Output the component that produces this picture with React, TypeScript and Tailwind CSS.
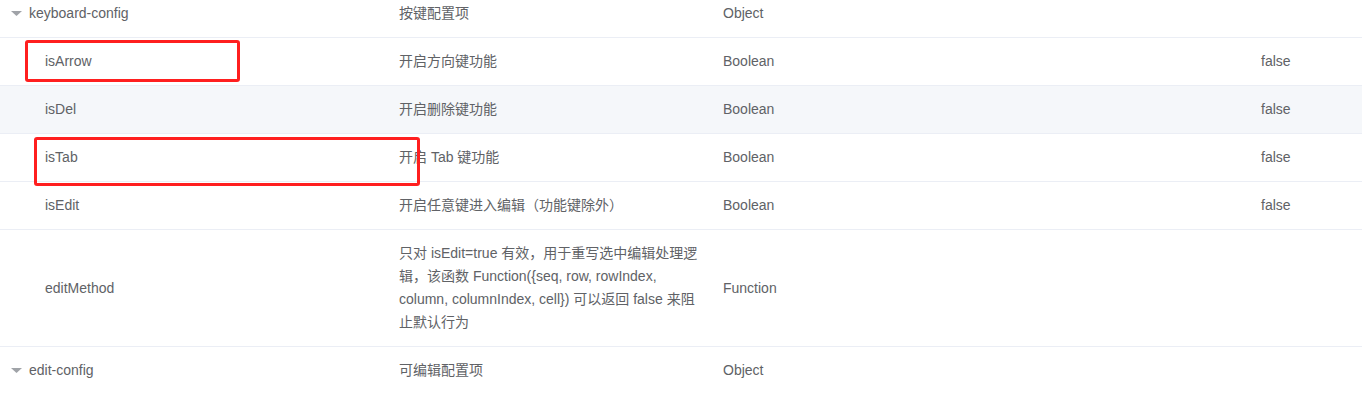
import React from 'react';

type Row = {
    name: string;
    desc: React.ReactNode;
    type: string;
    def?: string;
    parent?: boolean;
    striped?: boolean;
    tall?: boolean;
};

const rows: Row[] = [
    { name: 'keyboard-config', desc: '按键配置项', type: 'Object', parent: true },
    { name: 'isArrow', desc: '开启方向键功能', type: 'Boolean', def: 'false' },
    { name: 'isDel', desc: '开启删除键功能', type: 'Boolean', def: 'false', striped: true },
    { name: 'isTab', desc: '开启 Tab 键功能', type: 'Boolean', def: 'false' },
    { name: 'isEdit', desc: '开启任意键进入编辑（功能键除外）', type: 'Boolean', def: 'false' },
    {
        name: 'editMethod',
        desc: '只对 isEdit=true 有效，用于重写选中编辑处理逻辑，该函数 Function({seq, row, rowIndex, column, columnIndex, cell}) 可以返回 false 来阻止默认行为',
        type: 'Function',
        tall: true,
    },
    { name: 'edit-config', desc: '可编辑配置项', type: 'Object', parent: true },
];

const Caret = () => (
    <svg width="11" height="5" viewBox="0 0 11 5" className="mr-[7px] shrink-0">
        <path d="M0 0 L11 0 L5.5 5 Z" fill="#a0a3a8" />
    </svg>
);

const App = () => {
    return (
        <div
            className="relative w-[1362px] h-[393px] overflow-hidden bg-white text-[14px] text-[#606266]"
            style={{ fontFamily: '"Liberation Sans", Arial, "Noto Sans CJK SC", sans-serif' }}
        >
            <div className="-mt-[10px]">
                {rows.map((r) => (
                    <div
                        key={r.name}
                        className={`flex items-center border-b border-[#ebeef5] ${r.tall ? 'py-3' : 'h-12'} ${r.striped ? 'bg-[#f5f7fa]' : 'bg-white'}`}
                    >
                        <div className={`w-[387px] shrink-0 flex items-center ${r.parent ? 'pl-[11px]' : 'pl-[45px]'}`}>
                            {r.parent && <Caret />}
                            <span>{r.name}</span>
                        </div>
                        <div className="w-[324px] shrink-0 px-3">
                            <div className={r.tall ? 'leading-[23px]' : ''}>{r.desc}</div>
                        </div>
                        <div className="w-[538px] shrink-0 px-3">{r.type}</div>
                        <div className="flex-1 px-3">{r.def ?? ''}</div>
                    </div>
                ))}
            </div>

            {/* annotation boxes */}
            <div className="absolute left-[25px] top-[40px] w-[215px] h-[42px] border-[3px] border-[#ff1f1f] rounded-[3px]" />
            <div className="absolute left-[34px] top-[137px] w-[386px] h-[49px] border-[3px] border-[#ff1f1f] rounded-[3px]" />
        </div>
    );
};

export default App;
